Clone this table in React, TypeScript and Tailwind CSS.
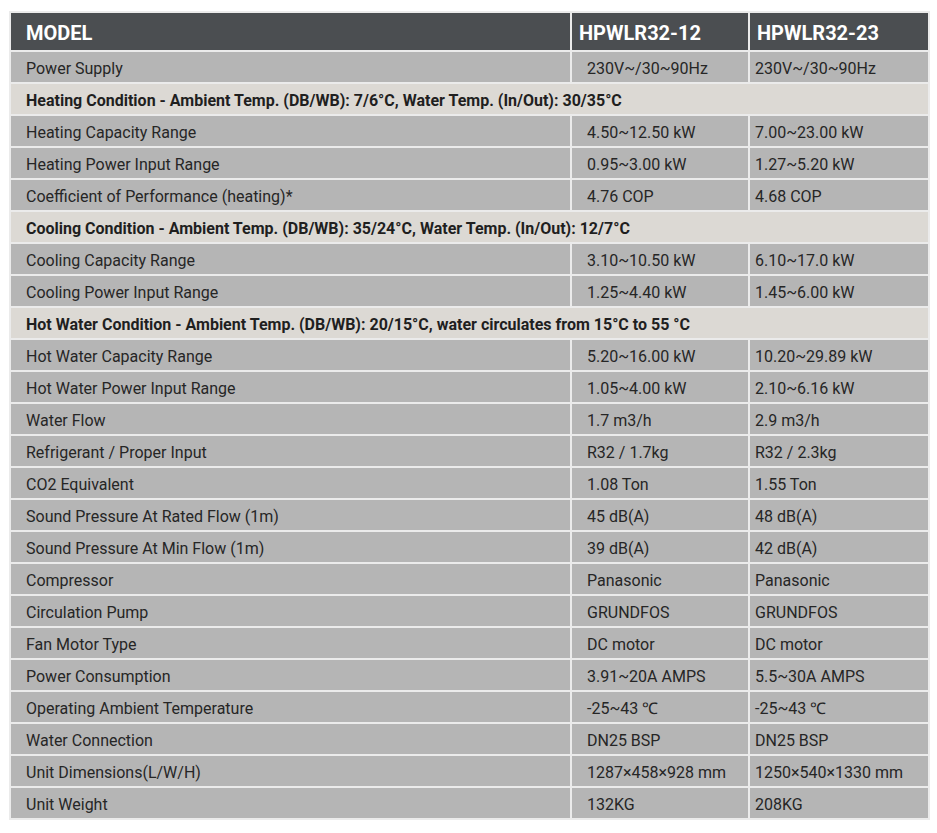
import React from "react";

type Row =
  | { kind: "data"; label: string; a: string; b: string }
  | { kind: "section"; label: string };

const rows: Row[] = [
  { kind: "data", label: "Power Supply", a: "230V~/30~90Hz", b: "230V~/30~90Hz" },
  {
    kind: "section",
    label: "Heating Condition - Ambient Temp. (DB/WB): 7/6°C, Water Temp. (In/Out): 30/35°C",
  },
  { kind: "data", label: "Heating Capacity Range", a: "4.50~12.50 kW", b: "7.00~23.00 kW" },
  { kind: "data", label: "Heating Power Input Range", a: "0.95~3.00 kW", b: "1.27~5.20 kW" },
  { kind: "data", label: "Coefficient of Performance (heating)*", a: "4.76 COP", b: "4.68 COP" },
  {
    kind: "section",
    label: "Cooling Condition - Ambient Temp. (DB/WB): 35/24°C, Water Temp. (In/Out): 12/7°C",
  },
  { kind: "data", label: "Cooling Capacity Range", a: "3.10~10.50 kW", b: "6.10~17.0 kW" },
  { kind: "data", label: "Cooling Power Input Range", a: "1.25~4.40 kW", b: "1.45~6.00 kW" },
  {
    kind: "section",
    label: "Hot Water Condition - Ambient Temp. (DB/WB): 20/15°C, water circulates from 15°C to 55 °C",
  },
  { kind: "data", label: "Hot Water Capacity Range", a: "5.20~16.00 kW", b: "10.20~29.89 kW" },
  { kind: "data", label: "Hot Water Power Input Range", a: "1.05~4.00 kW", b: "2.10~6.16 kW" },
  { kind: "data", label: "Water Flow", a: "1.7 m3/h", b: "2.9 m3/h" },
  { kind: "data", label: "Refrigerant / Proper Input", a: "R32 / 1.7kg", b: "R32 / 2.3kg" },
  { kind: "data", label: "CO2 Equivalent", a: "1.08 Ton", b: "1.55 Ton" },
  { kind: "data", label: "Sound Pressure At Rated Flow (1m)", a: "45 dB(A)", b: "48 dB(A)" },
  { kind: "data", label: "Sound Pressure At Min Flow (1m)", a: "39 dB(A)", b: "42 dB(A)" },
  { kind: "data", label: "Compressor", a: "Panasonic", b: "Panasonic" },
  { kind: "data", label: "Circulation Pump", a: "GRUNDFOS", b: "GRUNDFOS" },
  { kind: "data", label: "Fan Motor Type", a: "DC motor", b: "DC motor" },
  { kind: "data", label: "Power Consumption", a: "3.91~20A AMPS", b: "5.5~30A AMPS" },
  { kind: "data", label: "Operating Ambient Temperature", a: "-25~43 ℃", b: "-25~43 ℃" },
  { kind: "data", label: "Water Connection", a: "DN25 BSP", b: "DN25 BSP" },
  { kind: "data", label: "Unit Dimensions(L/W/H)", a: "1287×458×928 mm", b: "1250×540×1330 mm" },
  { kind: "data", label: "Unit Weight", a: "132KG", b: "208KG" },
];

const cell = "border-2 border-[#ebebeb] h-[32px] p-0 pt-[3px] align-middle";

const App: React.FC = () => {
  return (
    <div
      className="w-[937px] h-[833px] bg-white pt-[11px] pl-[9px]"
      style={{ fontFamily: "Roboto, 'Liberation Sans', sans-serif" }}
    >
      <table className="table-fixed border-collapse w-[919px] text-[#262626]">
        <colgroup>
          <col className="w-[561px]" />
          <col className="w-[178px]" />
          <col className="w-[180px]" />
        </colgroup>
        <thead>
          <tr className="bg-[#4b4e51] text-white text-[20px] font-bold">
            <th className={`${cell} h-[39px] text-left pl-[15px]`}>MODEL</th>
            <th className={`${cell} h-[39px] text-left pl-[7px]`}>HPWLR32-12</th>
            <th className={`${cell} h-[39px] text-left pl-[7px]`}>HPWLR32-23</th>
          </tr>
        </thead>
        <tbody className="text-[16px]">
          {rows.map((r) =>
            r.kind === "section" ? (
              <tr key={r.label} className="bg-[#dcd9d4]">
                <td colSpan={3} className={`${cell} pl-[15px] font-bold text-[16px] text-[#1f1f1f]`}>
                  {r.label}
                </td>
              </tr>
            ) : (
              <tr key={r.label} className="bg-[#b5b5b5]">
                <td className={`${cell} pl-[15px]`}>{r.label}</td>
                <td className={`${cell} pl-[15px]`}>{r.a}</td>
                <td className={`${cell} pl-[5px]`}>{r.b}</td>
              </tr>
            )
          )}
        </tbody>
      </table>
    </div>
  );
};

export default App;
